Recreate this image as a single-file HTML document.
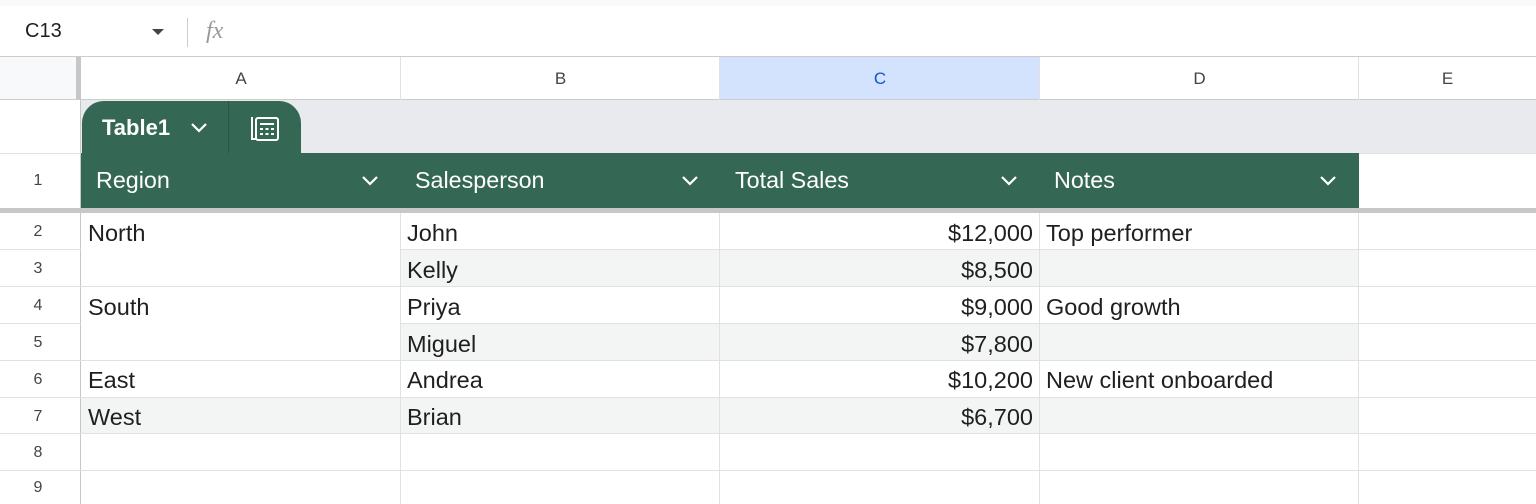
<!DOCTYPE html><html><head><style>
*{margin:0;padding:0;box-sizing:border-box}
body{width:1536px;height:504px;overflow:hidden;background:#fff;font-family:"Liberation Sans",Arial,sans-serif;position:relative}
.a{position:absolute}
.t{font-size:23.5px;color:#1f1f1f;line-height:37px}
.hd{color:#fff;font-size:23.3px;line-height:55px}
.rn{width:76px;text-align:center;font-size:16px;color:#444;left:0}
.cl{font-size:17px;color:#444;text-align:center;top:57px;line-height:43px}
.vl{top:57px;width:1px;height:447px;background:#e1e1e1}
</style></head><body>
<div class="a" style="left:0;top:0;width:1536px;height:6px;background:#f8f9fa"></div>
<div class="a" style="left:25px;top:6px;line-height:51px;font-size:20px;color:#1f1f1f">C13</div>
<div class="a" style="left:152px;top:29px;width:0;height:0;border-left:6px solid transparent;border-right:6px solid transparent;border-top:6px solid #444"></div>
<div class="a" style="left:187px;top:18px;width:1px;height:29px;background:#ccc"></div>
<div class="a" style="left:206px;top:6px;line-height:51px;font-size:24px;color:#999;font-style:italic;font-family:'Liberation Serif',serif">fx</div>
<div class="a" style="left:0;top:56px;width:1536px;height:1px;background:#ccc"></div>
<div class="a" style="left:0;top:57px;width:76px;height:43px;background:#f8f9fa"></div>
<div class="a" style="left:76px;top:57px;width:5px;height:43px;background:#c7c7c7"></div>
<div class="a" style="left:80px;top:100px;width:1px;height:404px;background:#c7c7c7"></div>
<div class="a" style="left:0;top:99px;width:1536px;height:1px;background:#ccc"></div>
<div class="a" style="left:720px;top:57px;width:320px;height:42px;background:#d3e3fd"></div>
<div class="a cl" style="left:81px;width:320px">A</div>
<div class="a cl" style="left:401px;width:319px">B</div>
<div class="a cl" style="left:720px;width:320px;color:#0b57d0">C</div>
<div class="a cl" style="left:1040px;width:319px">D</div>
<div class="a cl" style="left:1359px;width:177px">E</div>
<div class="a" style="left:81px;top:100px;width:1455px;height:53px;background:#e8eaed"></div>
<div class="a" style="left:0;top:153px;width:1536px;height:1px;background:#e1e1e1"></div>
<!-- alternating rows -->
<div class="a" style="left:401px;top:250px;width:958px;height:37px;background:#f3f5f4"></div>
<div class="a" style="left:401px;top:324px;width:958px;height:37px;background:#f3f5f4"></div>
<div class="a" style="left:81px;top:398px;width:1278px;height:36px;background:#f3f5f4"></div>
<!-- column lines -->
<div class="a vl" style="left:400px"></div>
<div class="a vl" style="left:719px"></div>
<div class="a vl" style="left:1039px"></div>
<div class="a vl" style="left:1358px"></div>
<div class="a" style="left:81px;top:100px;width:1455px;height:53px;background:#e8eaed"></div>
<div class="a" style="left:82px;top:101px;width:219px;height:53px;background:#356854;border-radius:22px 22px 0 0"></div>
<div class="a" style="left:228px;top:101px;width:1px;height:52px;background:#2a5443"></div>
<div class="a" style="left:102px;top:101px;color:#fff;font-size:22px;font-weight:bold;line-height:53px">Table1</div>
<svg class="a" style="left:189px;top:120px" width="20" height="14"><path d="M3 4l7 7 7-7" stroke="#fff" stroke-width="2.2" fill="none"/></svg>
<svg class="a" style="left:248px;top:112px" width="34" height="32" fill="none" stroke="#fff" stroke-width="2"><path d="M4 5v22h4"/><rect x="8" y="6" width="22" height="22" rx="2"/><path d="M12 12h14"/><path d="M12 17h3M17.5 17h3M23 17h3M12 22h3M17.5 22h3M23 22h3"/></svg>
<div class="a" style="left:81px;top:153px;width:1278px;height:55px;background:#356854"></div>
<div class="a hd" style="left:96px;top:153px">Region</div>
<div class="a hd" style="left:415px;top:153px">Salesperson</div>
<div class="a hd" style="left:735px;top:153px">Total Sales</div>
<div class="a hd" style="left:1054px;top:153px">Notes</div>
<svg class="a" style="left:360px;top:174px" width="20" height="14"><path d="M3 3l7 7 7-7" stroke="#fff" stroke-width="2.2" fill="none"/></svg>
<svg class="a" style="left:680px;top:174px" width="20" height="14"><path d="M3 3l7 7 7-7" stroke="#fff" stroke-width="2.2" fill="none"/></svg>
<svg class="a" style="left:999px;top:174px" width="20" height="14"><path d="M3 3l7 7 7-7" stroke="#fff" stroke-width="2.2" fill="none"/></svg>
<svg class="a" style="left:1318px;top:174px" width="20" height="14"><path d="M3 3l7 7 7-7" stroke="#fff" stroke-width="2.2" fill="none"/></svg>
<div class="a rn" style="top:153px;line-height:55px">1</div>
<div class="a" style="left:0;top:208px;width:1536px;height:5px;background:#c7c7c7"></div>
<!-- row lines -->
<div class="a" style="left:0;top:249px;width:81px;height:1px;background:#e1e1e1"></div>
<div class="a" style="left:401px;top:249px;width:1135px;height:1px;background:#e1e1e1"></div>
<div class="a" style="left:0;top:286px;width:1536px;height:1px;background:#e1e1e1"></div>
<div class="a" style="left:0;top:323px;width:81px;height:1px;background:#e1e1e1"></div>
<div class="a" style="left:401px;top:323px;width:1135px;height:1px;background:#e1e1e1"></div>
<div class="a" style="left:0;top:360px;width:1536px;height:1px;background:#e1e1e1"></div>
<div class="a" style="left:0;top:397px;width:1536px;height:1px;background:#e1e1e1"></div>
<div class="a" style="left:0;top:433px;width:1536px;height:1px;background:#e1e1e1"></div>
<div class="a" style="left:0;top:470px;width:1536px;height:1px;background:#e1e1e1"></div>
<div class="a rn" style="top:213px;line-height:37px">2</div>
<div class="a rn" style="top:250px;line-height:37px">3</div>
<div class="a rn" style="top:287px;line-height:37px">4</div>
<div class="a rn" style="top:324px;line-height:37px">5</div>
<div class="a rn" style="top:361px;line-height:37px">6</div>
<div class="a rn" style="top:398px;line-height:37px">7</div>
<div class="a rn" style="top:434px;line-height:37px">8</div>
<div class="a rn" style="top:471px;line-height:33px">9</div>
<div class="a t" style="left:88px;top:215px">North</div>
<div class="a t" style="left:88px;top:289px">South</div>
<div class="a t" style="left:88px;top:362px">East</div>
<div class="a t" style="left:88px;top:399px">West</div>
<div class="a t" style="left:407px;top:215px">John</div>
<div class="a t" style="left:407px;top:252px">Kelly</div>
<div class="a t" style="left:407px;top:289px">Priya</div>
<div class="a t" style="left:407px;top:326px">Miguel</div>
<div class="a t" style="left:407px;top:362px">Andrea</div>
<div class="a t" style="left:407px;top:399px">Brian</div>
<div class="a t" style="left:720px;width:313px;text-align:right;top:215px">$12,000</div>
<div class="a t" style="left:720px;width:313px;text-align:right;top:252px">$8,500</div>
<div class="a t" style="left:720px;width:313px;text-align:right;top:289px">$9,000</div>
<div class="a t" style="left:720px;width:313px;text-align:right;top:326px">$7,800</div>
<div class="a t" style="left:720px;width:313px;text-align:right;top:362px">$10,200</div>
<div class="a t" style="left:720px;width:313px;text-align:right;top:399px">$6,700</div>
<div class="a t" style="left:1046px;top:215px">Top performer</div>
<div class="a t" style="left:1046px;top:289px">Good growth</div>
<div class="a t" style="left:1046px;top:362px">New client onboarded</div>
</body></html>
